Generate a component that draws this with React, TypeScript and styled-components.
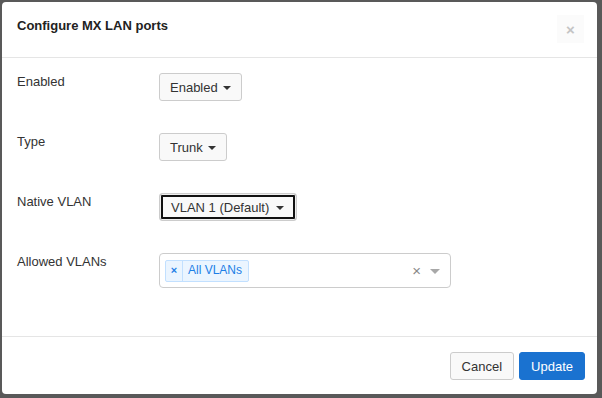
import React from "react";
import styled, { createGlobalStyle } from "styled-components";

const Global = createGlobalStyle`
  html, body { margin: 0; padding: 0; }
  body {
    font-family: "Liberation Sans", Arial, sans-serif;
    font-size: 13px;
    line-height: 1.42857;
    color: #333;
    background: #595959;
  }
  * { box-sizing: border-box; }
`;

const Backdrop = styled.div`
  width: 602px;
  height: 398px;
  padding: 2px 5px 4px 2px;
  background: #595959;
`;

const Modal = styled.div`
  width: 100%;
  height: 100%;
  background: #fff;
  border-radius: 4px;
  display: flex;
  flex-direction: column;
  overflow: hidden;
`;

const Header = styled.div`
  height: 56px;
  padding: 15px 13px 0 15px;
  border-bottom: 1px solid #e5e5e5;
  display: flex;
  justify-content: space-between;
  align-items: flex-start;
`;

const Title = styled.h4`
  margin: 0;
  font-size: 13px;
  font-weight: bold;
  line-height: 18.6px;
  color: #222;
`;

const Close = styled.button`
  width: 27px;
  height: 28px;
  margin-top: -2px;
  border: none;
  background: #fbfbfb;
  color: #c4c4c4;
  font-family: "Liberation Sans", Arial, sans-serif;
  font-size: 15px;
  font-weight: bold;
  line-height: 1;
  padding: 0;
  display: flex;
  align-items: center;
  justify-content: center;
`;

const Body = styled.div`
  flex: 1;
  padding: 15px 15px 0 15px;
  display: flex;
  flex-direction: column;
  gap: 32px;
`;

const Row = styled.div`
  display: flex;
  align-items: flex-start;
`;

const Label = styled.div`
  width: 142px;
  line-height: 18.6px;
  color: #333;
`;

const DropButton = styled.button<{ $focused?: boolean }>`
  height: 28px;
  padding: ${(p) => (p.$focused ? "0 12px 0 11px" : "0 10px")};
  border: 1px solid #ccc;
  border-radius: 3px;
  background: #f9f9f9;
  font-family: "Liberation Sans", Arial, sans-serif;
  font-size: 13px;
  color: #333;
  display: inline-flex;
  align-items: center;
  gap: ${(p) => (p.$focused ? "7px" : "5px")};
  box-shadow: ${(p) =>
    p.$focused ? "inset 0 0 0 1px #eee, inset 0 0 0 3px #111" : "none"};
`;

const Caret = styled.span`
  width: 0;
  height: 0;
  border-top: 4px solid #333;
  border-left: 4px solid transparent;
  border-right: 4px solid transparent;
  margin-top: 1px;
`;

const MultiSelect = styled.div`
  width: 292px;
  height: 35px;
  border: 1px solid #ccc;
  border-radius: 4px;
  background: #fff;
  display: flex;
  align-items: center;
  padding: 0 10px 0 5px;
`;

const Tag = styled.div`
  height: 22px;
  display: flex;
  align-items: stretch;
  border: 1px solid #c2e0ff;
  border-radius: 2px;
  background: #ebf5ff;
  color: #1d7fe6;
  font-size: 12px;
`;

const TagRemove = styled.span`
  width: 17px;
  border-right: 1px solid #c2e0ff;
  display: flex;
  align-items: center;
  justify-content: center;
  font-size: 11px;
  font-weight: bold;
`;

const TagText = styled.span`
  padding: 0 6px 0 5px;
  display: flex;
  align-items: center;
`;

const Spacer = styled.div`
  flex: 1;
`;

const Clear = styled.span`
  color: #888;
  font-size: 15px;
  line-height: 1;
  margin-right: 9px;
  margin-top: -1px;
`;

const Arrow = styled.span`
  width: 0;
  height: 0;
  border-top: 5px solid #a8a8a8;
  border-left: 5px solid transparent;
  border-right: 5px solid transparent;
  margin-top: 1px;
`;

const Footer = styled.div`
  height: 58px;
  border-top: 1px solid #e5e5e5;
  padding: 15px 12px 0 0;
  display: flex;
  justify-content: flex-end;
  align-items: flex-start;
  gap: 5px;
`;

const FooterButton = styled.button<{ $primary?: boolean }>`
  height: 28px;
  padding: 0 11px;
  border-radius: 3px;
  font-family: "Liberation Sans", Arial, sans-serif;
  font-size: 13px;
  border: 1px solid ${(p) => (p.$primary ? "#1a72d0" : "#ccc")};
  background: ${(p) => (p.$primary ? "#1a72d0" : "#f9f9f9")};
  color: ${(p) => (p.$primary ? "#fff" : "#333")};
`;

export default function App() {
  return (
    <>
      <Global />
      <Backdrop>
        <Modal>
          <Header>
            <Title>Configure MX LAN ports</Title>
            <Close>×</Close>
          </Header>
          <Body>
            <Row>
              <Label>Enabled</Label>
              <DropButton>
                Enabled <Caret />
              </DropButton>
            </Row>
            <Row>
              <Label>Type</Label>
              <DropButton>
                Trunk <Caret />
              </DropButton>
            </Row>
            <Row>
              <Label>Native VLAN</Label>
              <DropButton $focused>
                VLAN 1 (Default) <Caret />
              </DropButton>
            </Row>
            <Row>
              <Label>Allowed VLANs</Label>
              <MultiSelect>
                <Tag>
                  <TagRemove>×</TagRemove>
                  <TagText>All VLANs</TagText>
                </Tag>
                <Spacer />
                <Clear>×</Clear>
                <Arrow />
              </MultiSelect>
            </Row>
          </Body>
          <Footer>
            <FooterButton>Cancel</FooterButton>
            <FooterButton $primary>Update</FooterButton>
          </Footer>
        </Modal>
      </Backdrop>
    </>
  );
}
